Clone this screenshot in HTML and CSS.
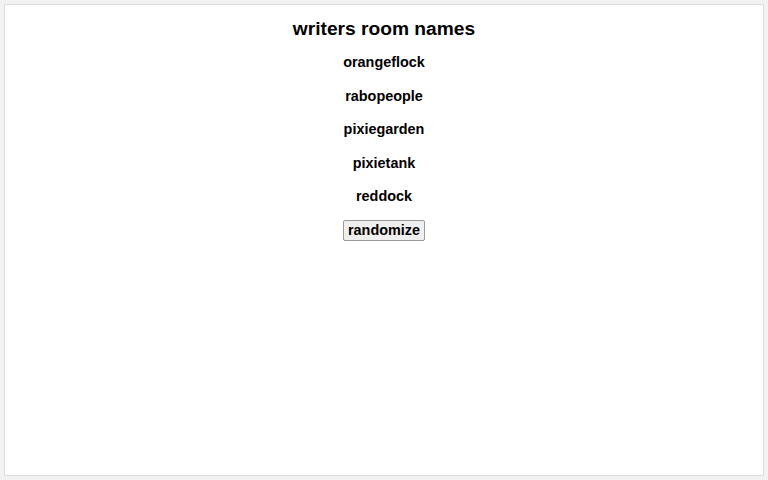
FILE: index.html
```html
<!DOCTYPE html>
<html lang="en">
<head>
    <meta charset="UTF-8">
    <meta name="viewport" content="width=device-width, initial-scale=1.0">
    <title>writers room names</title>
    <link rel="stylesheet" href="styles.css">
</head>
<body>

    <div class="panel">
        <h1>writers room names</h1>

        <div class="names" id="names">
            <p>orangeflock</p>
            <p>rabopeople</p>
            <p>pixiegarden</p>
            <p>pixietank</p>
            <p>reddock</p>
        </div>

        <button id="randomize">randomize</button>
    </div>

    <script>
        const namesBox = document.getElementById("names");
        const randomize = document.getElementById("randomize");

        let firstParts = ["orange", "rabo", "pixie", "red", "blue", "moon", "paper", "iron"];
        let lastParts = ["flock", "people", "garden", "tank", "dock", "house", "room", "works"];

        function pick(list) {
            return list[Math.floor(Math.random() * list.length)];
        }

        randomize.addEventListener("click", () => {
            namesBox.innerHTML = "";
            for (let i = 0; i < 5; i++) {
                const p = document.createElement("p");
                p.textContent = pick(firstParts) + pick(lastParts);
                namesBox.appendChild(p);
            }
        });
    </script>

</body>
</html>
```

FILE: styles.css
```css
html, body {
    height: 100%;
}
body {
    font-family: "Liberation Sans", Arial, sans-serif;
    background-color: #f2f2f2;
    color: #000;
    margin: 0;
    padding: 4px;
    box-sizing: border-box;
}
.panel {
    height: 100%;
    box-sizing: border-box;
    background: #fff;
    border: 1px solid #ddd;
    display: flex;
    flex-direction: column;
    align-items: center;
    padding-top: 13px;
}
h1 {
    font-size: 19.2px;
    line-height: 22px;
    margin: 0 0 14px;
}
.names {
    display: flex;
    flex-direction: column;
    align-items: center;
    gap: 16.5px;
}
.names p {
    margin: 0;
    font-size: 14.4px;
    font-weight: bold;
    line-height: 17px;
}
button {
    margin-top: 15px;
    font-family: inherit;
    font-size: 14.4px;
    font-weight: bold;
    line-height: 17px;
    padding: 1px 4px;
    background: #efefef;
    border: 1px solid #999;
    border-radius: 2px;
    color: #000;
}
```
